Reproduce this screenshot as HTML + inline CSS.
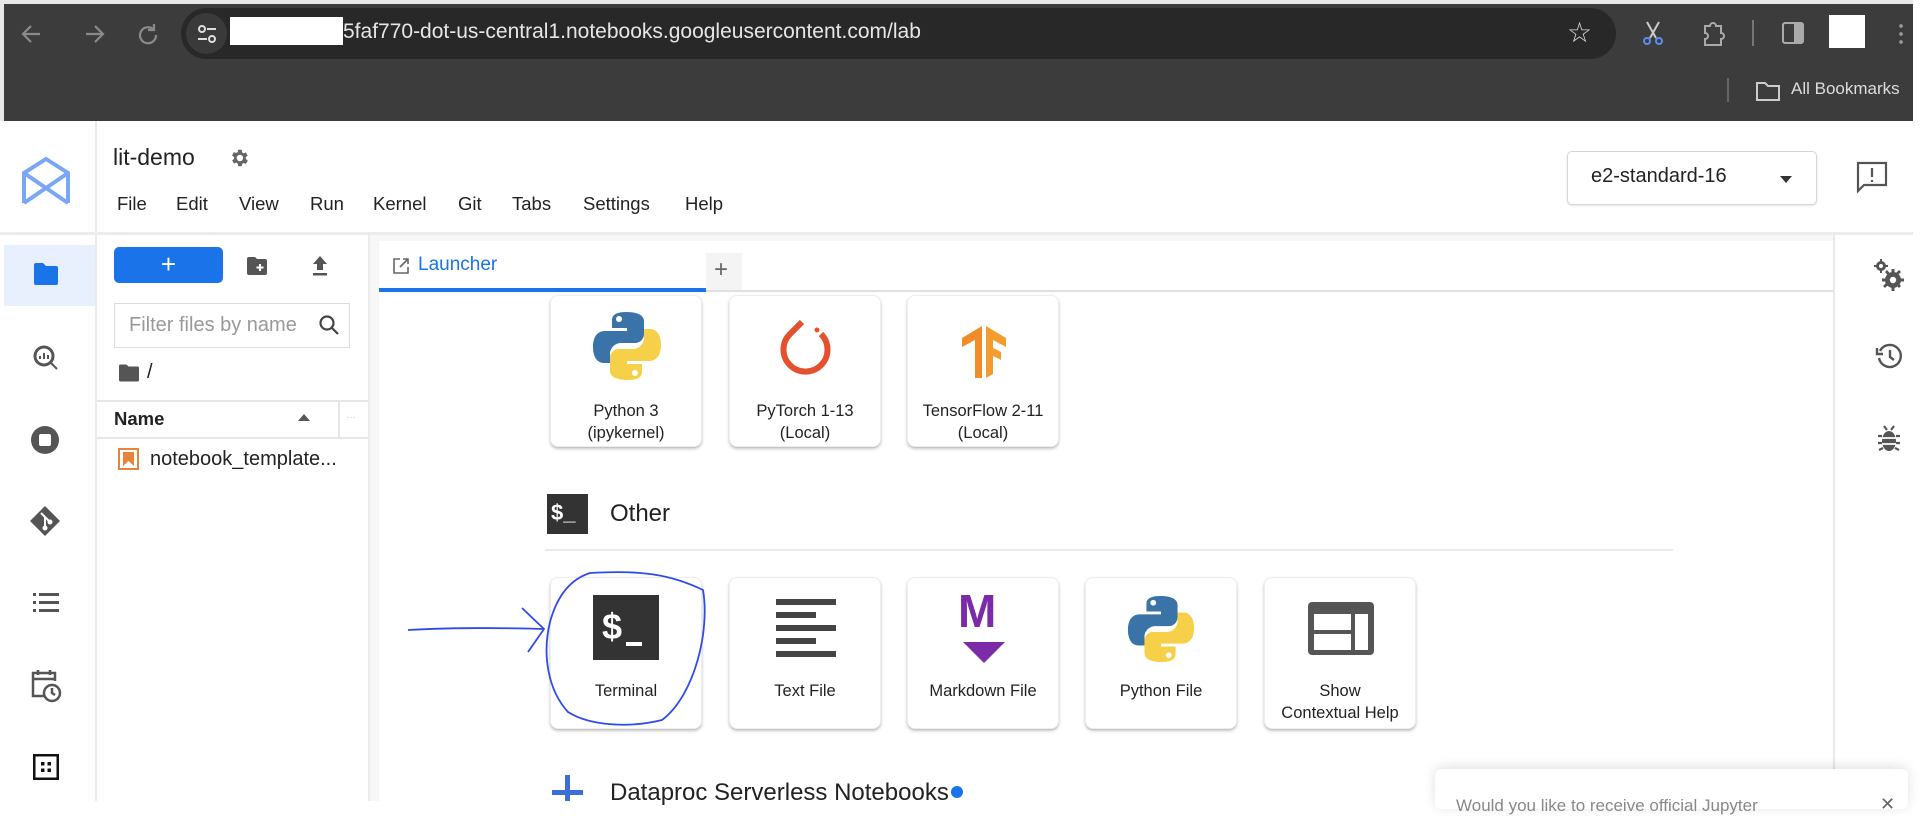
<!DOCTYPE html>
<html><head><meta charset="utf-8"><style>
*{margin:0;padding:0;box-sizing:border-box}
body{width:1920px;height:801px;overflow:hidden;background:#fff;font-family:"Liberation Sans",Arial,sans-serif;position:relative;color:#222}
.a{position:absolute}
.t{position:absolute;white-space:nowrap}
.card{position:absolute;width:152px;height:152px;background:#fff;border-radius:8px;box-shadow:0 1px 1px rgba(0,0,0,.08),0 2px 3px rgba(0,0,0,.22);border:1px solid #eee}
.card .lb{position:absolute;left:0;right:0;text-align:center;font-size:16.5px;line-height:22px;color:#222}
.menu span{position:absolute;top:193px;font-size:18.5px;color:#222}
</style></head><body>
<!-- chrome -->
<div class="a" style="left:0;top:0;width:1920px;height:121px;background:#3c3c3c"></div>
<div class="a" style="left:0;top:0;width:1920px;height:4px;background:#e8e8e8"></div>
<div class="a" style="left:0;top:0;width:4px;height:121px;background:#e8e8e8"></div>
<div class="a" style="left:1913px;top:0;width:7px;height:801px;background:#fff"></div>
<svg class="a" style="left:18px;top:20px" width="160" height="28" viewBox="0 0 160 28" fill="none" stroke="#8a8a8a" stroke-width="2.2">
<path d="M22 14H6M13 6L5 14l8 8"/><path d="M68 14h16M77 6l8 8-8 8"/><path d="M135 9a8 8 0 1 0 3 6M136 4v6h-6"/></svg>
<div class="a" style="left:181px;top:8px;width:1435px;height:51px;background:#282828;border-radius:26px"></div>
<div class="a" style="left:186px;top:13px;width:41px;height:41px;background:#3a3a3a;border-radius:50%"></div>
<svg class="a" style="left:196px;top:23px" width="22" height="22" viewBox="0 0 22 22" fill="none" stroke="#ddd" stroke-width="2"><circle cx="6" cy="6" r="3"/><path d="M11 6h9M2 16h9"/><circle cx="16" cy="16" r="3"/></svg>
<div class="a" style="left:230px;top:17px;width:113px;height:28px;background:#fff"></div>
<div class="t" style="left:343px;top:20px;font-size:21px;color:#e6e6e6">5faf770-dot-us-central1.notebooks.googleusercontent.com/lab</div>
<div class="t" style="left:1567px;top:16px;font-size:28px;color:#ddd">☆</div>
<svg class="a" style="left:1640px;top:20px" width="26" height="26" viewBox="0 0 26 26" fill="none" stroke="#5b8ef0" stroke-width="2"><path d="M7 2l9 16M19 2l-9 16" stroke="#ccc"/><circle cx="7" cy="21" r="3"/><circle cx="19" cy="21" r="3"/></svg>
<svg class="a" style="left:1700px;top:18px" width="26" height="30" viewBox="0 0 26 30" fill="none" stroke="#aaa" stroke-width="2"><path d="M5 8h5a3 3 0 0 1 6 0h5v7a3 3 0 0 1 0 6v6H5v-6a3 3 0 0 0 0-6z"/></svg>
<div class="a" style="left:1752px;top:20px;width:2px;height:26px;background:#777"></div>
<svg class="a" style="left:1780px;top:20px" width="26" height="26" viewBox="0 0 26 26"><rect x="3" y="3" width="20" height="20" rx="2" fill="none" stroke="#aaa" stroke-width="2"/><rect x="14" y="3" width="9" height="20" fill="#aaa"/></svg>
<div class="a" style="left:1829px;top:15px;width:36px;height:33px;background:#fff"></div>
<div class="a" style="left:1899px;top:22px;width:4px;height:22px;background:radial-gradient(circle,#999 1.7px,transparent 2px) 0 0/4px 8px"></div>
<div class="a" style="left:1727px;top:78px;width:2px;height:24px;background:#666"></div>
<svg class="a" style="left:1755px;top:80px" width="26" height="22" viewBox="0 0 26 22" fill="none" stroke="#ccc" stroke-width="2"><path d="M2 3h8l3 3h11v14H2z"/></svg>
<div class="t" style="left:1791px;top:79px;font-size:17px;color:#ddd">All Bookmarks</div>

<!-- jupyter header -->
<svg class="a" style="left:20px;top:155px" width="52" height="50" viewBox="0 0 52 50" fill="none" stroke="#7aa7f5" stroke-width="4"><path d="M4 48V18L26 4l22 14v30"/><path d="M4 18l44 30M48 18L4 48"/></svg>
<div class="a" style="left:95px;top:121px;width:2px;height:680px;background:#ececec"></div>
<div class="t" style="left:113px;top:144px;font-size:23px;color:#222">lit-demo</div>
<svg class="a" style="left:228px;top:147px" width="22" height="22" viewBox="0 0 24 24"><path fill="#666" d="M19.4 13a7.5 7.5 0 0 0 0-2l2.1-1.6-2-3.5-2.5 1a7 7 0 0 0-1.7-1L15 3h-4l-.4 2.6a7 7 0 0 0-1.7 1l-2.5-1-2 3.5L6.6 11a7.5 7.5 0 0 0 0 2l-2.1 1.6 2 3.5 2.5-1a7 7 0 0 0 1.7 1L11 21h4l.4-2.6a7 7 0 0 0 1.7-1l2.5 1 2-3.5zM13 15.5a3.5 3.5 0 1 1 0-7 3.5 3.5 0 0 1 0 7z"/></svg>
<div class="menu">
<span style="left:117px">File</span><span style="left:176px">Edit</span><span style="left:239px">View</span><span style="left:310px">Run</span><span style="left:373px">Kernel</span><span style="left:458px">Git</span><span style="left:512px">Tabs</span><span style="left:583px">Settings</span><span style="left:685px">Help</span>
</div>
<div class="a" style="left:1567px;top:151px;width:250px;height:54px;border:1.5px solid #d6d6d6;border-radius:5px;box-shadow:0 1px 2px rgba(0,0,0,.1)"></div>
<div class="t" style="left:1591px;top:165px;font-size:20px;color:#222">e2-standard-16</div>
<div class="a" style="left:1780px;top:176px;border-left:6px solid transparent;border-right:6px solid transparent;border-top:7px solid #333"></div>
<svg class="a" style="left:1855px;top:160px" width="34" height="34" viewBox="0 0 34 34" fill="none" stroke="#555" stroke-width="2.2"><path d="M3 3h28v22H9l-6 6z"/><path d="M17 8v9M17 20v2"/></svg>
<div class="a" style="left:0;top:232px;width:1913px;height:3px;background:#ececec"></div>

<!-- left sidebar -->
<div class="a" style="left:4px;top:245px;width:91px;height:61px;background:#e8f0fe"></div>
<svg class="a" style="left:32px;top:262px" width="28" height="24" viewBox="0 0 28 24"><path fill="#1a73e8" d="M2 3a2 2 0 0 1 2-2h7l3 3h10a2 2 0 0 1 2 2v15a2 2 0 0 1-2 2H4a2 2 0 0 1-2-2z"/></svg>
<svg class="a" style="left:32px;top:344px" width="28" height="30" viewBox="0 0 28 30" fill="none" stroke="#555" stroke-width="3"><circle cx="12" cy="12" r="9"/><path d="M19 19l6 6M8 15v-3M12 15v-6M16 15v-4" stroke-width="2"/></svg>
<svg class="a" style="left:30px;top:425px" width="30" height="30" viewBox="0 0 30 30"><circle cx="15" cy="15" r="14" fill="#555"/><rect x="9" y="9" width="12" height="12" rx="2" fill="#fff"/></svg>
<svg class="a" style="left:28px;top:504px" width="34" height="34" viewBox="0 0 34 34"><path fill="#555" d="M17 2l15 15-15 15L2 17z"/><path d="M13 9l4 4v12M17 13l5 5" stroke="#fff" stroke-width="2" fill="none"/><circle cx="17" cy="24" r="2.5" fill="#fff"/><circle cx="22" cy="18" r="2.5" fill="#fff"/></svg>
<svg class="a" style="left:33px;top:592px" width="26" height="22" viewBox="0 0 26 22" fill="#555"><rect x="0" y="1" width="3" height="3"/><rect x="6" y="1" width="20" height="3"/><rect x="0" y="9" width="3" height="3"/><rect x="6" y="9" width="20" height="3"/><rect x="0" y="17" width="3" height="3"/><rect x="6" y="17" width="20" height="3"/></svg>
<svg class="a" style="left:30px;top:668px" width="34" height="36" viewBox="0 0 34 36" fill="none" stroke="#555" stroke-width="2.5"><path d="M14 28H3V5h22v8M3 11h22"/><path d="M8 2v5M20 2v5"/><circle cx="22" cy="25" r="8"/><path d="M22 20v5l3 2"/></svg>
<svg class="a" style="left:33px;top:754px" width="26" height="26" viewBox="0 0 26 26"><rect x="1" y="1" width="24" height="24" fill="#fff" stroke="#111" stroke-width="3"/><rect x="8" y="8" width="3.5" height="3.5" fill="#111"/><rect x="14.5" y="8" width="3.5" height="3.5" fill="#111"/><rect x="8" y="14.5" width="3.5" height="3.5" fill="#111"/><rect x="14.5" y="14.5" width="3.5" height="3.5" fill="#111"/></svg>

<!-- file browser -->
<div class="a" style="left:114px;top:247px;width:109px;height:36px;background:#1a73e8;border-radius:5px;color:#fff;font-size:26px;text-align:center;line-height:34px">+</div>
<svg class="a" style="left:246px;top:256px" width="22" height="20" viewBox="0 0 22 20"><path fill="#555" d="M1 3a2 2 0 0 1 2-2h6l2 2h8a2 2 0 0 1 2 2v12a2 2 0 0 1-2 2H3a2 2 0 0 1-2-2z"/><path d="M14 8v7M10.5 11.5h7" stroke="#fff" stroke-width="2"/></svg>
<svg class="a" style="left:311px;top:255px" width="18" height="22" viewBox="0 0 18 22" fill="#555"><path d="M9 1l7 8h-4v6H6V9H2z"/><rect x="2" y="18" width="14" height="2.5"/></svg>
<div class="a" style="left:114px;top:303px;width:236px;height:45px;border:1.5px solid #ddd"></div>
<div class="t" style="left:129px;top:314px;font-size:20px;color:#999">Filter files by name</div>
<svg class="a" style="left:318px;top:314px" width="22" height="22" viewBox="0 0 22 22" fill="none" stroke="#444" stroke-width="2.2"><circle cx="9" cy="9" r="6.5"/><path d="M14 14l6 6"/></svg>
<svg class="a" style="left:118px;top:364px" width="22" height="18" viewBox="0 0 22 18"><path fill="#555" d="M1 2a1.5 1.5 0 0 1 1.5-1.5h6l2 2h9A1.5 1.5 0 0 1 21 4v12a1.5 1.5 0 0 1-1.5 1.5h-17A1.5 1.5 0 0 1 1 16z"/></svg>
<div class="t" style="left:147px;top:361px;font-size:20px;color:#222">/</div>
<div class="a" style="left:97px;top:400px;width:272px;height:1.5px;background:#e6e6e6"></div>
<div class="a" style="left:97px;top:437px;width:272px;height:1.5px;background:#e6e6e6"></div>
<div class="a" style="left:338px;top:400px;width:1.5px;height:38px;background:#e6e6e6"></div>
<div class="t" style="left:114px;top:408px;font-size:18.5px;font-weight:bold;color:#222">Name</div>
<div class="a" style="left:298px;top:414px;border-left:6px solid transparent;border-right:6px solid transparent;border-bottom:7px solid #555"></div>
<div class="t" style="left:346px;top:412px;font-size:10px;color:#ccc">···</div>
<svg class="a" style="left:118px;top:448px" width="21" height="22" viewBox="0 0 21 22"><rect x="1" y="1" width="19" height="20" fill="#fff" stroke="#e8843a" stroke-width="2"/><path d="M5 4h11v14l-5.5-5L5 18z" fill="#e8843a"/></svg>
<div class="t" style="left:150px;top:448px;font-size:20px;color:#222">notebook_template...</div>
<div class="a" style="left:368px;top:235px;width:2px;height:566px;background:#ececec"></div>

<!-- main area -->
<div class="a" style="left:370px;top:235px;width:1463px;height:566px;background:#f7f7f8"></div>
<div class="a" style="left:379px;top:241px;width:1454px;height:560px;background:#fff"></div>
<div class="a" style="left:379px;top:290px;width:1454px;height:2px;background:#e0e0e0"></div>
<div class="a" style="left:379px;top:288px;width:327px;height:4px;background:#1a73e8"></div>
<div class="a" style="left:706px;top:253px;width:36px;height:37px;background:#f4f4f4"></div>
<div class="t" style="left:714px;top:256px;font-size:24px;color:#666">+</div>
<svg class="a" style="left:392px;top:257px" width="18" height="18" viewBox="0 0 18 18" fill="none" stroke="#666" stroke-width="1.6"><path d="M8 2H2v14h14v-6M11 2h5v5M16 2L8 10"/></svg>
<div class="t" style="left:418px;top:254px;font-size:19px;color:#1a73e8">Launcher</div>
<div class="a" style="left:1833px;top:235px;width:2px;height:566px;background:#e8e8e8"></div>

<!-- right sidebar icons -->
<svg class="a" style="left:1872px;top:258px" width="34" height="36" viewBox="0 0 34 36"><g fill="#555"><circle cx="9" cy="8" r="5"/><path d="M8 1h2v14H8zM2 7h14v2H2z"/><circle cx="21" cy="22" r="8"/><path d="M19.5 11h3v22h-3zM10 20.5h22v3H10zM13 14l2-2 14 16-2 2zM27 12l2 2-16 16-2-2z"/></g><circle cx="9" cy="8" r="2" fill="#fff"/><circle cx="21" cy="22" r="3.2" fill="#fff"/></svg>
<svg class="a" style="left:1875px;top:342px" width="28" height="28" viewBox="0 0 28 28" fill="none" stroke="#555" stroke-width="2.4"><path d="M5 9a11 11 0 1 1-1 7"/><path d="M2 6v6h6"/><path d="M15 8v7l4 3"/></svg>
<svg class="a" style="left:1877px;top:424px" width="24" height="30" viewBox="0 0 24 30"><path d="M7 2l3 4M17 2l-3 4M1 12h4M19 12h4M1 19h4M19 19h4M2 26l4-2M22 26l-4-2" stroke="#555" stroke-width="2.2"/><ellipse cx="12" cy="17" rx="7" ry="10" fill="#555"/><path d="M5 14h14M5 20h14" stroke="#fff" stroke-width="1.8"/></svg>

<!-- row 1 cards -->
<div class="card" style="left:550px;top:295px"><svg class="a" style="left:40px;top:14px" width="72" height="72" viewBox="0 0 72 72"><path fill="#3a73a8" d="M35 2c-14 0-14 6-14 9v7h15v3H14C7 21 2 26 2 37s5 16 11 16h6v-9c0-6 5-11 11-11h14c5 0 9-4 9-9V11c0-5-5-9-18-9z"/><circle cx="28" cy="9" r="3" fill="#fff"/><path fill="#f7d049" d="M37 70c14 0 14-6 14-9v-7H36v-3h22c7 0 12-5 12-16s-5-16-11-16h-6v9c0 6-5 11-11 11H28c-5 0-9 4-9 9v13c0 5 5 9 18 9z"/><circle cx="44" cy="63" r="3" fill="#fff"/></svg><div class="lb" style="top:104px">Python 3<br>(ipykernel)</div></div>
<div class="card" style="left:729px;top:295px"><svg class="a" style="left:48px;top:22px" width="56" height="66" viewBox="0 0 56 66" fill="none" stroke="#e5512e" stroke-width="6"><path d="M24 4L12 16a22 22 0 1 0 31 0"/><circle cx="39" cy="12" r="2.5" fill="#e5512e" stroke="none"/></svg><div class="lb" style="top:104px">PyTorch 1-13<br>(Local)</div></div>
<div class="card" style="left:907px;top:295px"><svg class="a" style="left:54px;top:30px" width="44" height="52" viewBox="0 0 44 52" fill="#f28c28"><path d="M20 0L0 12v9l13-7v38l7 4V0z"/><path d="M24 0l20 12v9l-13-7v8l8 4v8l-8-4v18l-7 4z" fill="#f59c2e"/></svg><div class="lb" style="top:104px">TensorFlow 2-11<br>(Local)</div></div>

<!-- Other section -->
<div class="a" style="left:547px;top:494px;width:41px;height:40px;background:#333"></div>
<div class="t" style="left:551px;top:500px;font-size:22px;color:#fff;font-weight:bold">$_</div>
<div class="t" style="left:610px;top:500px;font-size:24px;color:#222">Other</div>
<div class="a" style="left:545px;top:549px;width:1128px;height:2px;background:#eaeaea"></div>

<div class="card" style="left:550px;top:577px"><div class="a" style="left:42px;top:17px;width:66px;height:65px;background:#333"></div><div class="t" style="left:51px;top:28px;font-size:36px;color:#fff;font-weight:bold">$</div><div class="a" style="left:75px;top:64px;width:16px;height:4px;background:#fff"></div><div class="lb" style="top:102px">Terminal</div></div>
<div class="card" style="left:729px;top:577px"><div class="a" style="left:46px;top:21px;width:60px;height:6px;background:#444"></div><div class="a" style="left:46px;top:34px;width:40px;height:6px;background:#444"></div><div class="a" style="left:46px;top:47px;width:60px;height:6px;background:#444"></div><div class="a" style="left:46px;top:60px;width:40px;height:6px;background:#444"></div><div class="a" style="left:46px;top:73px;width:60px;height:6px;background:#444"></div><div class="lb" style="top:102px">Text File</div></div>
<div class="card" style="left:907px;top:577px"><div class="t" style="left:50px;top:6px;font-size:46px;font-weight:bold;color:#7b2ba8">M</div><div class="a" style="left:55px;top:64px;border-left:21px solid transparent;border-right:21px solid transparent;border-top:21px solid #7b2ba8"></div><div class="lb" style="top:102px">Markdown File</div></div>
<div class="card" style="left:1085px;top:577px"><svg class="a" style="left:40px;top:16px" width="70" height="70" viewBox="0 0 72 72"><path fill="#3a73a8" d="M35 2c-14 0-14 6-14 9v7h15v3H14C7 21 2 26 2 37s5 16 11 16h6v-9c0-6 5-11 11-11h14c5 0 9-4 9-9V11c0-5-5-9-18-9z"/><circle cx="28" cy="9" r="3" fill="#fff"/><path fill="#f7d049" d="M37 70c14 0 14-6 14-9v-7H36v-3h22c7 0 12-5 12-16s-5-16-11-16h-6v9c0 6-5 11-11 11H28c-5 0-9 4-9 9v13c0 5 5 9 18 9z"/><circle cx="44" cy="63" r="3" fill="#fff"/></svg><div class="lb" style="top:102px">Python File</div></div>
<div class="card" style="left:1264px;top:577px"><div class="a" style="left:43px;top:24px;width:66px;height:53px;background:#555;border-radius:4px"></div><div class="a" style="left:49px;top:36px;width:37px;height:16px;background:#fff"></div><div class="a" style="left:49px;top:56px;width:37px;height:16px;background:#fff"></div><div class="a" style="left:90px;top:36px;width:13px;height:36px;background:#fff"></div><div class="lb" style="top:102px">Show<br>Contextual Help</div></div>

<!-- annotation -->
<svg class="a" style="left:400px;top:560px" width="320" height="180" viewBox="0 0 320 180" fill="none" stroke="#2f4ce8" stroke-width="1.8">
<path d="M8 70C60 67 110 68 144 69M122 48L144 69L128 92"/>
<path d="M190 13C240 10 270 14 303 30C310 70 295 135 262 160C230 168 190 166 168 152C148 130 142 95 150 62C156 40 168 20 190 13Z"/></svg>

<!-- dataproc -->
<div class="a" style="left:565px;top:775px;width:5px;height:26px;background:#3b6fd6"></div>
<div class="a" style="left:552px;top:790px;width:31px;height:5px;background:#3b6fd6"></div>
<div class="t" style="left:610px;top:779px;font-size:24px;color:#222">Dataproc Serverless Notebooks</div>
<div class="a" style="left:951px;top:786px;width:12px;height:12px;border-radius:50%;background:#1a73e8"></div>

<!-- toast -->
<div class="a" style="left:1435px;top:769px;width:473px;height:40px;background:#fff;border-radius:6px;box-shadow:0 -2px 12px rgba(0,0,0,.12)"></div>
<div class="t" style="left:1456px;top:796px;font-size:17px;color:#888">Would you like to receive official Jupyter</div>
<div class="t" style="left:1880px;top:794px;font-size:18px;color:#666">✕</div>
</body></html>
